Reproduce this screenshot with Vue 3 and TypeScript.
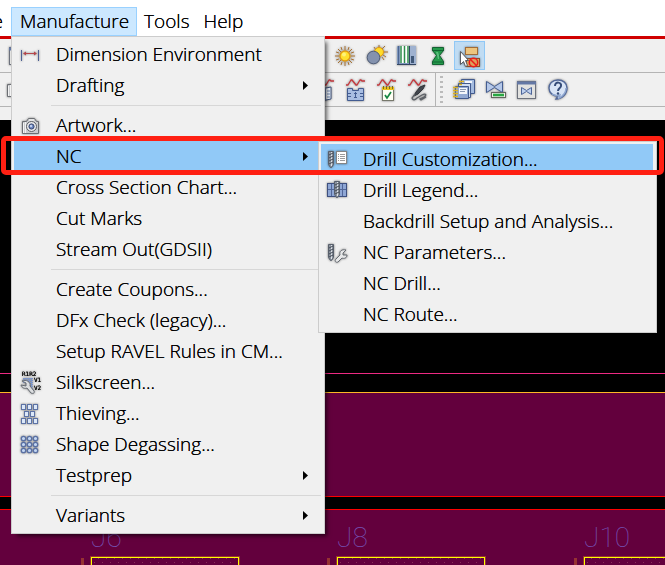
<script setup lang="ts">
interface MenuEntry {
  label?: string
  icon?: string
  arrow?: boolean
  active?: boolean
  separator?: boolean
}

const drill = (x: number, y: number): string => `
  <path d="M${x + 0.5} ${y + 0.5}h5v13l-2 3h-1l-2 -3z" fill="#8c949f" stroke="#59606c"/>
  <path d="M${x + 3} ${y + 1}h1v14h-1z" fill="#dfe4ea"/>
  <path d="M${x + 1} ${y + 4}l4 -2M${x + 1} ${y + 7}l4 -2M${x + 1} ${y + 10}l4 -2M${x + 1} ${y + 13}l4 -2" stroke="#434a55" stroke-width="1"/>`

const wave = '<path d="M3 8h2l3-5h1l4 5h1l3-5h1l1 1h3" fill="none" stroke="#c5373c" stroke-width="1.300" stroke-linejoin="round"/>'

const cells = [[3, 2], [9, 2], [15, 2], [6, 9], [12, 9], [3, 16], [9, 16], [15, 16]]
  .map(([x, y]) => `<rect x="${x + 0.5}" y="${y + 0.5}" width="4" height="5" fill="#dce8f8" stroke="#5d73a6" stroke-width="1"/>`)
  .join('')

const dots = [5, 11, 17]
  .flatMap((y) => [5, 11, 17].map((x) => `<circle cx="${x + 0.5}" cy="${y + 0.5}" r="2.200" fill="#c4d7f2" stroke="#5a70a3" stroke-width="1.300"/>`))
  .join('')

const icons: Record<string, string> = {
  dimension: `
    <path d="M3.500 7v11M20.500 7v11" stroke="#4d6094"/>
    <path d="M6 10.500h12" stroke="#b6474b"/>
    <path d="M5 10.500l3-2v4zM19 10.500l-3-2v4z" fill="#b6474b"/>`,
  camera: `
    <path d="M4.500 7.500h4l2-3h6l2 3h2v12h-16z" fill="#c9cbce" stroke="#6b6e73"/>
    <path d="M5.500 9v10M7.500 8v11" stroke="#f2f2f2"/>
    <path d="M11 6h5" stroke="#fff"/>
    <circle cx="13.500" cy="12.500" r="5" fill="#ececed" stroke="#5d6066"/>
    <circle cx="13.500" cy="12.500" r="2.600" fill="#6f89c2" stroke="#35436b"/>
    <circle cx="13" cy="12" r="1" fill="#dbe6fa"/>`,
  silkscreen: `
    <text x="4" y="5" font-family="DejaVu Sans Mono" font-size="6" fill="#000">R1R2</text>
    <text x="16" y="11" font-family="DejaVu Sans Mono" font-size="6" fill="#000">V1</text>
    <text x="16" y="19" font-family="DejaVu Sans Mono" font-size="6" fill="#000">V2</text>
    <path d="M5 7.500h10M5 9.500h10M5 11.500h10M8 13.500h7M10 15.500h5M12 17.500h3M5.500 7v5M7.500 7v5M9.500 7v8M11.500 7v10M13.500 7v11" stroke="#7d95c8" stroke-width="1"/>
    <path d="M4 10l4 2v3l-5-1c1 3 4 4 6 3l4 5c2 1 4 0 3-2l-4-5c1-4-4-7-8-5z" fill="#dcdee0" stroke="#666b72"/>`,
  thieving: cells,
  degassing: dots,
  drillList: `${drill(3, 3)}
    <rect x="11.500" y="3.500" width="10" height="12" fill="#fff" stroke="#858585"/>
    <path d="M13 6.500h1M15 6.500h5M13 8.500h1M15 8.500h5M13 10.500h1M15 10.500h5M13 12.500h1M15 12.500h5" stroke="#9a9a9a"/>`,
  drillTable: `
    <rect x="2.500" y="4.500" width="19" height="13" fill="#8fa7d5" stroke="#3e5080"/>
    <path d="M6.500 5v12M17.500 5v12M3 10.500h18" stroke="#526799"/>
    ${drill(9, 2)}`,
  drillWrench: `${drill(3, 3)}
    <path d="M11 18l4-4c-1-4 2-6 6-5l-3 3v2l4 0c0 3-3 4-5 3l-4 4c-2 1-4-1-2-3z" fill="#e6e7e8" stroke="#676c73"/>`,
  sun: `
    <path d="M12 3v4M12 19v4M2 13h4M18 13h4M5 6l3 3M16 17l3 3M19 6l-3 3M5 20l3-3M8 4l1 3M16 4l-1 3M3 9l3 1M21 9l-3 1M3 17l3-1M21 17l-3-1M8 22l1-3M16 22l-1-3" stroke="#a87335" stroke-width="1"/>
    <circle cx="12" cy="13" r="5" fill="#ffe02f" stroke="#e29a10" stroke-width="1.400"/>
    <circle cx="11" cy="11.500" r="2" fill="#fff27a"/>`,
  eclipse: `
    <path d="M15 2v4M10 4l2 3M21 3l-3 3M20 9h4M19 12l3 2M18 14l2 3" stroke="#a87335"/>
    <circle cx="15" cy="9" r="4.500" fill="#ffdc28" stroke="#e29a10"/>
    <circle cx="9.500" cy="14.500" r="6.300" fill="#8492ae" stroke="#4f5d78"/>`,
  books: `
    <rect x="2" y="3" width="19" height="19" rx="1" fill="#7f97bd"/>
    <rect x="5" y="3" width="9" height="17" fill="#fff"/>
    <path d="M6 3v17M9.500 3v17M13 3v17" stroke="#2c8c4a" stroke-width="1.500"/>
    <path d="M3.500 3v18" stroke="#4d658f"/>
    <path d="M15 3h6v19h-6z" fill="#9fb2d0"/>
    <path d="M14.500 3v19M2 21.500h19" stroke="#334662"/>
    <path d="M16 13h3v7h-3z" fill="#405878"/>`,
  hourglass: `
    <path d="M6.500 4.500h11v3l-4 5l4 6v3h-11v-3l4-6l-4-5z" fill="#259a4b" stroke="#126332"/>
    <path d="M6 7.500h12M6 19h12" stroke="#126332"/>
    <path d="M10 9h2l1 3v4h-1z" fill="#58be7b"/>`,
  select: `
    <rect x="8.500" y="4.500" width="12" height="7" fill="#edc47e" stroke="#a16c38"/>
    <rect x="9.500" y="15.500" width="13" height="8" fill="#dda15c" stroke="#8d4c28"/>
    <circle cx="16.500" cy="19.500" r="4.200" fill="none" stroke="#ed1a19" stroke-width="1.500"/>
    <path d="M13.500 16.500l6 6" stroke="#ed1a19" stroke-width="1.500"/>
    <path d="M3.500 8.500v13l3-3l2 5l2-1l-2-5h3z" fill="#fff" stroke="#5a5d63"/>`,
  waveBook: `${wave}
    <path d="M8 13l6-2l5-1v12l-5 1l-6 1z" fill="#eef4fc" stroke="#40557f"/>
    <path d="M13.500 11v12M15 14h3M15 17h3M15 20h3" stroke="#7187b1"/>`,
  waveBoard: `${wave}
    <path d="M4.500 11.500h5v2h6v-2h5v12h-16z" fill="#a9bee2" stroke="#435c91"/>
    <path d="M5 16.500h3M17 16.500h3M5 19.500h3M17 19.500h3M12.500 15v6M11 16.500h3M11 20.500h3" stroke="#435c91"/>`,
  wavePad: `${wave}
    <rect x="8.500" y="11.500" width="11" height="12" fill="#fffff4" stroke="#77786c"/>
    <path d="M8 11.500h12" stroke="#ecc21a" stroke-width="3"/>
    <path d="M9.500 9v3M12.500 9v3M15.500 9v3M18.500 9v3" stroke="#7d6a1c"/>
    <path d="M11 18l2 3l4-6" fill="none" stroke="#168641" stroke-width="1.700"/>`,
  wavePen: `${wave}
    <path d="M20 8l-5 2l-4 5l-2 4l4-2l5-5z" fill="#42464d" stroke="#30343a"/>
    <path d="M10 17l-3 4c1 3 3 2 5 0l5-3c4-2 5 0 2 2l-4 2l1 1l5-3" fill="none" stroke="#5c6066" stroke-width="1.300"/>`,
  pages: `
    <path d="M9.500 2.500h13v14h-13z" fill="#a5bce0" stroke="#425a8d"/>
    <rect x="13" y="4" width="7" height="2" fill="#f4f7fb"/>
    <path d="M6.500 6.500h12v14h-12z" fill="#cfddf1" stroke="#425a8d"/>
    <path d="M3.500 9.500h13v12h-13z" fill="#93aad2" stroke="#425a8d"/>
    <rect x="7" y="11" width="8" height="6" fill="#f4f7fb"/>
    <path d="M8 12.500h6M8 14.500h5" stroke="#8c9ab2"/>
    <path d="M1 10.500h5M1 13.500h5M1 16.500h5M1 19.500h5M7 4.500h5M7 7.500h3" stroke="#deb21e" stroke-width="1.700"/>`,
  bowBar: `
    <path d="M3.500 4.500l8 5l8-5v11l-8-5l-8 5z" fill="#b5c8e9" stroke="#445d91"/>
    <rect x="8.500" y="15.500" width="14" height="5" fill="#eff0ea" stroke="#63655e"/>
    <path d="M10 18h11" stroke="#28a742" stroke-width="2.600"/>`,
  bowWindow: `
    <rect x="3.500" y="4.500" width="18" height="17" fill="#e2e2e0" stroke="#6c717c"/>
    <path d="M3 6h19" stroke="#6478a5" stroke-width="3"/>
    <path d="M7.500 10.500l5 3l5-3v7l-5-3l-5 3z" fill="#bed0ed" stroke="#4c6498"/>`,
  help: `
    <path d="M13 3c-6 0-9 4-9 8c0 5 4 8 9 8l-2 3c6 0 11-5 11-11c0-5-4-8-9-8z" fill="#d8e4f6" stroke="#53699a" stroke-width="1.400"/>
    <path d="M7 17c3 2 5 2 8 1l-1 3c4-2 7-5 7-10" fill="none" stroke="#8fa7d0" stroke-width="1.500"/>
    <path d="M10 9c0-5 7-4 6 0c0 2-3 2-3 5" fill="none" stroke="#344b78" stroke-width="2"/>
    <circle cx="13" cy="16.500" r="1.200" fill="#344b78"/>`,
}

const manufactureMenu: MenuEntry[] = [
  { label: 'Dimension Environment', icon: 'dimension' },
  { label: 'Drafting', arrow: true },
  { separator: true },
  { label: 'Artwork...', icon: 'camera' },
  { label: 'NC', arrow: true, active: true },
  { label: 'Cross Section Chart...' },
  { label: 'Cut Marks' },
  { label: 'Stream Out(GDSII)' },
  { separator: true },
  { label: 'Create Coupons...' },
  { label: 'DFx Check (legacy)...' },
  { label: 'Setup RAVEL Rules in CM...' },
  { label: 'Silkscreen...', icon: 'silkscreen' },
  { label: 'Thieving...', icon: 'thieving' },
  { label: 'Shape Degassing...', icon: 'degassing' },
  { label: 'Testprep', arrow: true },
  { separator: true },
  { label: 'Variants', arrow: true },
]

const ncMenu: MenuEntry[] = [
  { label: 'Drill Customization...', icon: 'drillList', active: true },
  { label: 'Drill Legend...', icon: 'drillTable' },
  { label: 'Backdrill Setup and Analysis...' },
  { label: 'NC Parameters...', icon: 'drillWrench' },
  { label: 'NC Drill...' },
  { label: 'NC Route...' },
]

const viewTools = ['sun', 'eclipse', 'books', 'hourglass', 'select']
const waveTools = ['waveBook', 'waveBoard', 'wavePad', 'wavePen']
const windowTools = ['pages', 'bowBar', 'bowWindow', 'help']

const connectors = [
  { name: 'J6', x: 91 },
  { name: 'J8', x: 337 },
  { name: 'J10', x: 584 },
]
</script>

<template>
  <div class="window">
    <nav class="menubar">
      <button class="menu-title clipped" type="button">e</button>
      <div class="menu-root">
        <button class="menu-title open" type="button">Manufacture</button>
        <div class="menu main-menu">
          <template v-for="(entry, i) in manufactureMenu" :key="i">
            <hr v-if="entry.separator" class="separator" />
            <div v-else class="entry">
              <button class="item" :class="{ active: entry.active }" type="button">
                <svg class="item-icon" viewBox="0 0 23 23" v-html="entry.icon ? icons[entry.icon] : ''"></svg>
                <span class="label">{{ entry.label }}</span>
                <svg v-if="entry.arrow" class="arrow" viewBox="0 0 5 9"><path d="M0 0L5 4.500L0 9z" /></svg>
              </button>
              <div v-if="entry.active" class="menu sub-menu">
                <button
                  v-for="sub in ncMenu"
                  :key="sub.label"
                  class="item"
                  :class="{ active: sub.active }"
                  type="button"
                >
                  <svg class="item-icon" viewBox="0 0 23 23" v-html="sub.icon ? icons[sub.icon] : ''"></svg>
                  <span class="label">{{ sub.label }}</span>
                </button>
              </div>
            </div>
          </template>
        </div>
      </div>
      <button class="menu-title" type="button">Tools</button>
      <button class="menu-title" type="button">Help</button>
    </nav>

    <div class="toolbar">
      <div class="tools leading inset">
        <button class="tool" type="button" aria-label="Window"><svg viewBox="0 0 25 25" v-html="icons.bowWindow"></svg></button>
      </div>
      <div class="tools">
        <button
          v-for="tool in viewTools"
          :key="tool"
          class="tool"
          :class="{ pressed: tool === 'select' }"
          type="button"
          :aria-label="tool"
        >
          <svg viewBox="0 0 25 25" v-html="icons[tool]"></svg>
        </button>
      </div>
    </div>
    <div class="toolbar">
      <div class="tools leading short">
        <button class="tool" type="button" aria-label="Camera"><svg viewBox="0 0 25 25" v-html="icons.camera"></svg></button>
      </div>
      <div class="tools bounded">
        <button v-for="tool in waveTools" :key="tool" class="tool" type="button" :aria-label="tool">
          <svg viewBox="0 0 25 25" v-html="icons[tool]"></svg>
        </button>
      </div>
      <span class="grip"></span>
      <div class="tools">
        <button v-for="tool in windowTools" :key="tool" class="tool" type="button" :aria-label="tool">
          <svg viewBox="0 0 25 25" v-html="icons[tool]"></svg>
        </button>
      </div>
    </div>

    <main class="workspace">
      <svg class="board" shape-rendering="crispEdges">
        <defs>
          <pattern id="mesh" x="2" y="1" width="8" height="8" patternUnits="userSpaceOnUse">
            <path d="M1 1h1v1h-1zM5 5h1v1h-1z" fill="#8a2d59" />
          </pattern>
        </defs>
        <rect y="253" width="100%" height="1" fill="#ed2a83" />
        <rect y="273" width="100%" height="103" fill="#63003d" />
        <rect y="272" width="100%" height="1" fill="#fcb826" />
        <rect y="376" width="100%" height="1" fill="#f00" />
        <rect y="390" width="100%" height="100%" fill="#63003d" />
        <rect y="389" width="100%" height="1" fill="#f00" />
        <g v-for="c in connectors" :key="c.name" :transform="`translate(${c.x} 0)`">
          <text class="refdes" x="0" y="427">{{ c.name }}</text>
          <rect x="-10" y="438" width="3" height="100%" fill="#963232" />
          <rect x="-1" y="436" width="150" height="100%" fill="#963232" />
          <rect x="0" y="437" width="148" height="100%" fill="#ff0" />
          <rect x="1" y="438" width="146" height="100%" fill="#63003d" />
          <rect x="1" y="438" width="146" height="100%" fill="url(#mesh)" />
        </g>
      </svg>
    </main>

    <div class="callout"></div>
  </div>
</template>

<style>
body {
  margin: 0;
  overflow: hidden;
}
</style>

<style scoped>
.window {
  position: relative;
  display: flex;
  flex-direction: column;
  min-height: 100vh;
  overflow: hidden;
  background: #f0f0f0;
  color: #000;
  font-family: "Open Sans", "Noto Sans", sans-serif;
  font-size: 19px;
  font-weight: 300;
  text-shadow: 0 0 0 #000;
}

button {
  box-sizing: border-box;
  margin: 0;
  padding: 0;
  border: 0;
  background: none;
  color: inherit;
  font: inherit;
  text-shadow: inherit;
}

.menubar {
  display: flex;
  align-items: flex-end;
  height: 36px;
  background: #fff;
  border-bottom: 3px solid #d00000;
}

.menu-root {
  position: relative;
}

.menu-title {
  height: 29px;
  padding: 0 6px;
  line-height: 27px;
  border: 1px solid transparent;
  white-space: nowrap;
}

.menu-title.open {
  padding: 0 7px 0 8px;
  background: #cce8ff;
  border-color: #99d1ff;
}

.menu-title.clipped {
  display: flex;
  justify-content: flex-end;
  width: 11px;
  padding: 0 7px 0 0;
}

.menu {
  position: absolute;
  box-sizing: border-box;
  padding: 2px;
  background: #f0f0f0;
  border: 1px solid #ccc;
}

.main-menu {
  top: 100%;
  left: 0;
  z-index: 2;
  width: 314px;
  box-shadow: 4px 4px 4px -2px rgba(0, 0, 0, 0.6);
}

.sub-menu {
  top: 0;
  left: 304px;
  z-index: 1;
  width: 339px;
  padding-right: 3px;
}

.entry {
  position: relative;
}

.item {
  display: flex;
  align-items: center;
  width: 100%;
  height: 31px;
  padding: 0 14px 0 4px;
  text-align: left;
  white-space: nowrap;
}

.item.active {
  background: #91c9f7;
}

.item-icon {
  flex: none;
  width: 23px;
  height: 23px;
  margin-right: 15px;
  filter: drop-shadow(0 0 1px rgba(0, 0, 0, 0.5));
}

.label {
  flex: 1;
  line-height: 31px;
}

.arrow {
  width: 5px;
  height: 9px;
}

.separator {
  height: 1px;
  margin: 4px 1px 4px 37px;
  border: 0;
  background: #d7d7d7;
}

.toolbar {
  display: flex;
  align-items: center;
  height: 33px;
  border-bottom: 1px solid #b4b4b4;
}

.tools {
  display: flex;
  flex: none;
}

.leading {
  box-sizing: border-box;
  width: 330px;
}

.leading.inset {
  padding-left: 3px;
}

.leading.short {
  width: 309px;
}

.bounded {
  height: 33px;
  align-items: center;
  padding-right: 2px;
  border-right: 1px solid #b4b4b4;
}

.tool {
  display: flex;
  align-items: center;
  justify-content: center;
  width: 31px;
  height: 29px;
}

.tool svg {
  width: 25px;
  height: 25px;
  filter: drop-shadow(0 0 1px rgba(0, 0, 0, 0.5));
}

.tool.pressed {
  background: #c0dcf3;
  outline: 1px solid #90c8f6;
  outline-offset: -1px;
}

.grip {
  width: 3px;
  height: 27px;
  margin: 0 6px 0 4px;
  background: repeating-linear-gradient(#bbb 0 2px, transparent 2px 5px);
}

.workspace {
  display: flex;
  flex: 1;
  min-height: 0;
  margin-top: 13px;
  background: #000;
}

.board {
  flex: 1;
  width: 100%;
  min-width: 0;
}

.refdes {
  fill: #7552b4;
  font-family: Roboto, sans-serif;
  font-size: 28px;
  font-weight: 100;
  text-shadow: none;
}

.callout {
  position: absolute;
  z-index: 3;
  top: 136px;
  right: 1px;
  left: 1px;
  box-sizing: border-box;
  height: 39px;
  border: 5px solid #ff2013;
  border-radius: 5px;
  pointer-events: none;
}
</style>
